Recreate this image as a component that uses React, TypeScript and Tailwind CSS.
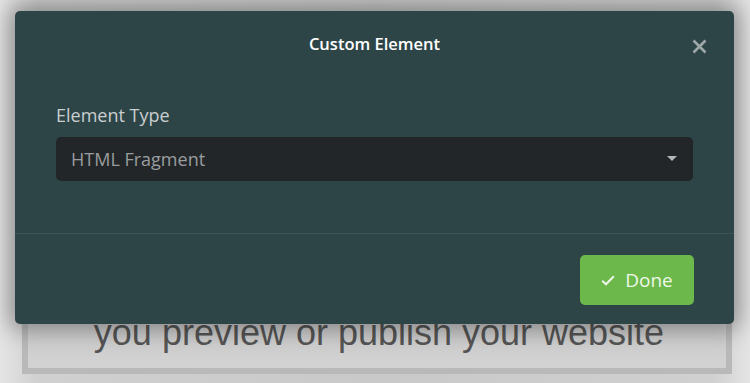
import React from "react";

export default function App() {
  return (
    <div className="relative w-[750px] h-[383px] overflow-hidden bg-[linear-gradient(90deg,#e4e4e4_0%,#d0d0d0_5%,#c9c9c9_50%,#d0d0d0_95%,#e4e4e4_100%)] font-['Open_Sans',sans-serif]">
      {/* background page content */}
      <div className="pt-[250px] pl-[22px] pr-[18px]">
        <div className="h-[124px] border-[6px] border-[#b9b9b9] bg-[linear-gradient(180deg,#c4c4c4,#d2d2d2)] flex items-end justify-center pb-[17px]">
          <span className="font-['Liberation_Sans',Arial,sans-serif] text-[36px] leading-none text-[#555555] ml-[4px]">
            you preview or publish your website
          </span>
        </div>
      </div>

      {/* modal */}
      <div className="absolute left-[15px] top-[11px] w-[719px] h-[313px] rounded-[5px] bg-[#2e4548] shadow-[0_0_22px_6px_rgba(0,0,0,0.35)] flex flex-col">
        <div className="relative h-[66px] flex items-center justify-center">
          <span className="text-white font-semibold text-[16.5px] leading-none">Custom Element</span>
          <svg
            className="absolute right-[27px] top-[28px]"
            width="15"
            height="15"
            viewBox="0 0 15 15"
          >
            <path d="M1.5 1.5 L13.5 13.5 M13.5 1.5 L1.5 13.5" stroke="#9fa8a8" strokeWidth="2.6" strokeLinecap="butt" />
          </svg>
        </div>
        <div className="px-[41px] pt-[26px] pb-[52px]">
          <div className="text-[#c9cfcf] text-[18px] leading-[24px] mb-[10px]">Element Type</div>
          <div className="h-[44px] rounded-[5px] bg-[#222629] flex items-center justify-between pl-[15px] pr-[16px]">
            <span className="text-[#9a9d9f] text-[18px]">HTML Fragment</span>
            <svg width="10" height="6" viewBox="0 0 10 6">
              <path d="M0 0 L10 0 L5 5 Z" fill="#b5b8b8" />
            </svg>
          </div>
        </div>
        <div className="h-px bg-[#3b5357]" />
        <div className="flex justify-end pt-[21px] pr-[40px]">
          <button className="w-[114px] h-[50px] rounded-[5px] bg-[#6cb84a] flex items-center justify-center gap-[10px] text-[#eef7e9] text-[19px]">
            <svg width="14" height="11" viewBox="0 0 14 11">
              <path d="M1.2 5.8 L5 9.3 L12.8 1.3" stroke="#eef7e9" strokeWidth="2" fill="none" />
            </svg>
            <span>Done</span>
          </button>
        </div>
      </div>
    </div>
  );
}
